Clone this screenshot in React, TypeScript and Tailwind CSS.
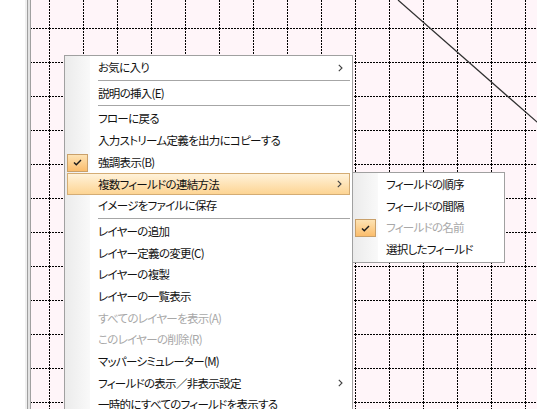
import React from "react";

type Item =
  | { kind: "sep" }
  | { kind: "item"; label: string; sub?: boolean; checked?: boolean; disabled?: boolean; active?: boolean };

const sep: Item = { kind: "sep" };
const it = (label: string, opts: Partial<Omit<Extract<Item, { kind: "item" }>, "kind" | "label">> = {}): Item => ({
  kind: "item",
  label,
  ...opts,
});

const mainItems: Item[] = [
  it("お気に入り", { sub: true }),
  sep,
  it("説明の挿入(E)"),
  sep,
  it("フローに戻る"),
  it("入力ストリーム定義を出力にコピーする"),
  it("強調表示(B)", { checked: true }),
  it("複数フィールドの連結方法", { sub: true, active: true }),
  it("イメージをファイルに保存"),
  sep,
  it("レイヤーの追加"),
  it("レイヤー定義の変更(C)"),
  it("レイヤーの複製"),
  it("レイヤーの一覧表示"),
  it("すべてのレイヤーを表示(A)", { disabled: true }),
  it("このレイヤーの削除(R)", { disabled: true }),
  it("マッパーシミュレーター(M)"),
  it("フィールドの表示／非表示設定", { sub: true }),
  it("一時的にすべてのフィールドを表示する"),
];

const subItems: Item[] = [
  it("フィールドの順序"),
  it("フィールドの間隔"),
  it("フィールドの名前", { checked: true, disabled: true }),
  it("選択したフィールド"),
];

function Chevron() {
  return (
    <svg width="5" height="8" viewBox="0 0 5 8" className="shrink-0">
      <path d="M0.8 0.8 L4 4 L0.8 7.2" fill="none" stroke="#404040" strokeWidth="1.1" />
    </svg>
  );
}

function CheckBox() {
  return (
    <div className="flex h-[18px] w-[21px] items-center justify-center border border-[#c9a06a] bg-[linear-gradient(to_bottom,#fde3b4,#fbbd6c)]">
      <svg width="9" height="7" viewBox="0 0 9 7">
        <path d="M1 3.5 L3.3 5.8 L8 1" fill="none" stroke="#1a1a1a" strokeWidth="1.4" />
      </svg>
    </div>
  );
}

function Menu({ items, className }: { items: Item[]; className: string }) {
  return (
    <div
      className={`absolute border border-[#a0a0a0] bg-white px-[2px] py-[1px] font-['Noto_Sans_CJK_JP','Noto_Sans',sans-serif] text-[11.5px] tracking-[-0.7px] [font-feature-settings:'palt'] ${className}`}
    >
      {/* image margin */}
      <div className="pointer-events-none absolute bottom-0 left-0 top-0 w-[25px] bg-[linear-gradient(to_right,#ebebeb,#f9f9f9)]" />
      {items.map((item, i) =>
        item.kind === "sep" ? (
          <div key={i} className="relative h-[3px] pl-[31px]">
            <div className="mt-[1px] h-px bg-[#a6a6a6]" />
          </div>
        ) : (
          <div
            key={i}
            className={`relative flex h-[21.7px] items-center pr-[7px] ${
              item.active ? "border border-[#d4ac74] bg-[linear-gradient(to_bottom,#fff2da,#fdd493)]" : ""
            }`}
          >
            <div className={`flex w-[31px] shrink-0 items-center ${item.active ? "-ml-px" : ""}`}>
              {item.checked && <CheckBox />}
            </div>
            <span
              className={`flex-1 whitespace-nowrap leading-none ${item.disabled ? "text-[#a8a8a8]" : "text-[#111]"}`}
            >
              {item.label}
            </span>
            {item.sub && <Chevron />}
          </div>
        )
      )}
    </div>
  );
}

// canvas grid: 34px cells, dotted lines; lines fall at x=49, y=28 on the page
function Grid() {
  return (
    <svg width="520" height="420" className="block">
      <defs>
        <pattern id="cell" x="18" y="28" width="34" height="34" patternUnits="userSpaceOnUse">
          <line x1="0.5" y1="0" x2="0.5" y2="34" stroke="#000" strokeDasharray="2 1" />
          <line x1="0" y1="0.5" x2="34" y2="0.5" stroke="#000" strokeDasharray="2 1" />
        </pattern>
      </defs>
      <rect width="520" height="420" fill="url(#cell)" />
      <line x1="367" y1="0" x2="567" y2="175.6" stroke="#2e2e2e" strokeWidth="1.2" />
    </svg>
  );
}

export default function App() {
  return (
    <div className="relative flex h-[409px] w-[537px] overflow-hidden bg-white">
      <div className="w-[25px] shrink-0 bg-white" />
      <div className="flex shrink-0">
        <div className="w-[2px] bg-[#f0f0f0]" />
        <div className="w-px bg-[#a0a0a0]" />
        <div className="w-[2px] bg-[#e3e3e3]" />
        <div className="w-px bg-[#a0a0a0]" />
      </div>
      <div className="flex-1 overflow-hidden bg-[#fff5f9]">
        <Grid />
      </div>

      <Menu items={mainItems} className="left-[64px] top-[55px] w-[289px]" />
      <Menu items={subItems} className="left-[352px] top-[172px] z-10 w-[153px]" />
    </div>
  );
}
